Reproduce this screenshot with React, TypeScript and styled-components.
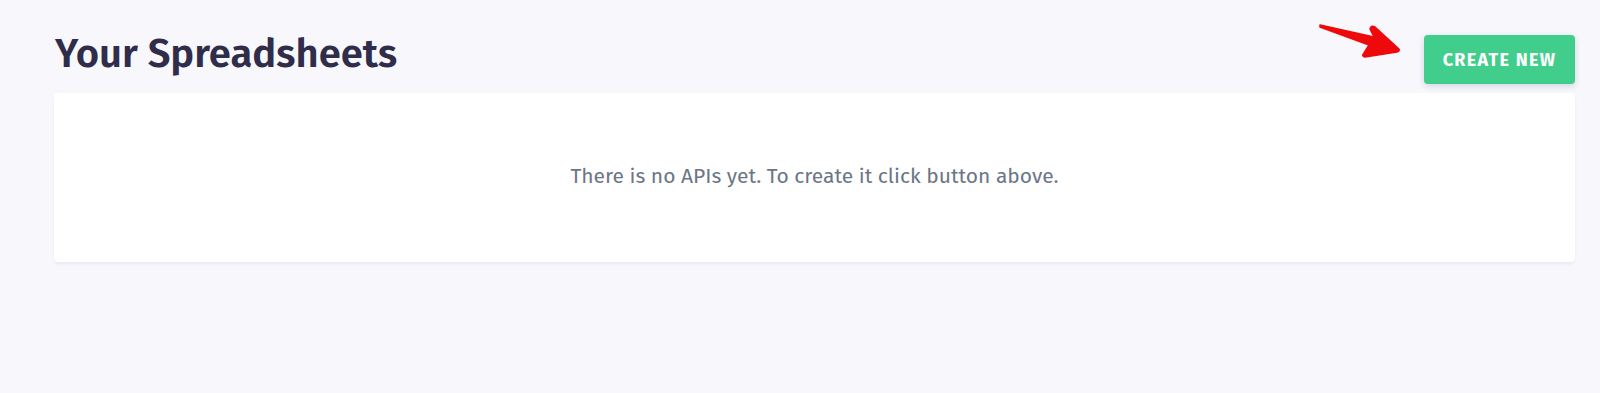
import styled, { createGlobalStyle } from 'styled-components';

const GlobalStyle = createGlobalStyle`
  html, body {
    margin: 0;
    padding: 0;
    background: #f7f7fc;
    font-family: "Fira Sans", "Noto Sans", "DejaVu Sans", sans-serif;
  }
`;

const Page = styled.div`
  padding: 35px 25px 0 54px;
  height: 393px;
  box-sizing: border-box;
`;

const Header = styled.div`
  display: flex;
  align-items: flex-start;
  justify-content: space-between;
  height: 58px;
`;

const Title = styled.h1`
  margin: -1px 0 0 1px;
  font-size: 40px;
  line-height: 40px;
  font-weight: 600;
  color: #2f2d4a;
`;

const Actions = styled.div`
  position: relative;
  display: flex;
`;

const Arrow = styled.svg`
  position: absolute;
  left: -106px;
  top: -12px;
`;

const CreateButton = styled.button`
  height: 49px;
  width: 151px;
  padding: 0;
  border: none;
  border-radius: 4px;
  background: #41cd8b;
  color: #fff;
  font-family: inherit;
  font-size: 18px;
  font-weight: 700;
  letter-spacing: 1.3px;
  text-transform: uppercase;
  box-shadow: 0 2px 6px rgba(40, 60, 90, 0.18);
  cursor: pointer;
`;

const Card = styled.div`
  background: #fff;
  border-radius: 4px;
  height: 169px;
  display: flex;
  align-items: center;
  justify-content: center;
  box-shadow: 0 2px 3px rgba(50, 50, 93, 0.07);
`;

const Empty = styled.p`
  margin: 0 0 3px;
  font-size: 21px;
  color: #6b7686;
`;

export default function App() {
  return (
    <>
      <GlobalStyle />
      <Page>
        <Header>
          <Title>Your Spreadsheets</Title>
          <Actions>
            <Arrow width="86" height="40" viewBox="0 0 86 40">
              <path
                d="M2 2 L56 14 L52 6 Q53 2 57 4 L81 26 Q82 28 79 29 L47 34 Q43 33 46 30 L51 22 L2 4 Z"
                fill="#ee0a0a"
                stroke="#ee0a0a"
                strokeWidth="1.5"
                strokeLinejoin="round"
              />
            </Arrow>
            <CreateButton>Create New</CreateButton>
          </Actions>
        </Header>
        <Card>
          <Empty>There is no APIs yet. To create it click button above.</Empty>
        </Card>
      </Page>
    </>
  );
}
